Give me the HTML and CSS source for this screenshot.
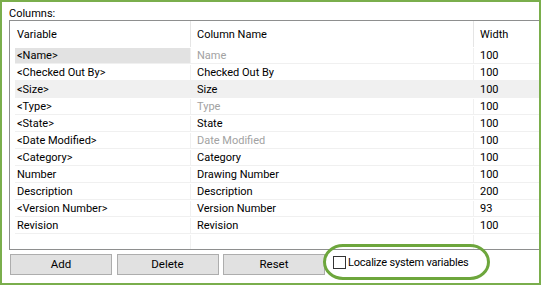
FILE: index.html
```html
<!DOCTYPE html>
<html>
<head>
<meta charset="utf-8">
<link rel="stylesheet" href="styles.css">
</head>
<body>
<div class="frame">
  <div class="label">Columns:</div>
  <div class="table">
    <div class="row head">
      <div class="c1">Variable</div>
      <div class="c2">Column Name</div>
      <div class="c3">Width</div>
    </div>
    <div class="row">
      <div class="c1 sel">&lt;Name&gt;</div>
      <div class="c2 dim">Name</div>
      <div class="c3">100</div>
    </div>
    <div class="row">
      <div class="c1">&lt;Checked Out By&gt;</div>
      <div class="c2">Checked Out By</div>
      <div class="c3">100</div>
    </div>
    <div class="row hover">
      <div class="c1">&lt;Size&gt;</div>
      <div class="c2">Size</div>
      <div class="c3">100</div>
    </div>
    <div class="row">
      <div class="c1">&lt;Type&gt;</div>
      <div class="c2 dim">Type</div>
      <div class="c3">100</div>
    </div>
    <div class="row">
      <div class="c1">&lt;State&gt;</div>
      <div class="c2">State</div>
      <div class="c3">100</div>
    </div>
    <div class="row">
      <div class="c1">&lt;Date Modified&gt;</div>
      <div class="c2 dim">Date Modified</div>
      <div class="c3">100</div>
    </div>
    <div class="row">
      <div class="c1">&lt;Category&gt;</div>
      <div class="c2">Category</div>
      <div class="c3">100</div>
    </div>
    <div class="row">
      <div class="c1">Number</div>
      <div class="c2">Drawing Number</div>
      <div class="c3">100</div>
    </div>
    <div class="row">
      <div class="c1">Description</div>
      <div class="c2">Description</div>
      <div class="c3">200</div>
    </div>
    <div class="row">
      <div class="c1">&lt;Version Number&gt;</div>
      <div class="c2">Version Number</div>
      <div class="c3">93</div>
    </div>
    <div class="row">
      <div class="c1">Revision</div>
      <div class="c2">Revision</div>
      <div class="c3">100</div>
    </div>
    <div class="row empty">
      <div class="c1"></div>
      <div class="c2"></div>
      <div class="c3"></div>
    </div>
  </div>
  <div class="actions">
    <button class="btn">Add</button>
    <button class="btn">Delete</button>
    <button class="btn">Reset</button>
    <label class="check">
      <span class="box"></span>
      <span>Localize system variables</span>
    </label>
  </div>
</div>
</body>
</html>
```

FILE: styles.css
```css
html, body {
  margin: 0;
  padding: 0;
  background: #ffffff;
}

.frame {
  width: 541px;
  height: 285px;
  box-sizing: border-box;
  border: 2px solid #7aae4c;
  overflow: hidden;
  padding: 4px 0 0 7px;
  font-family: "Roboto", "Liberation Sans", sans-serif;
  font-size: 11px;
  color: #000;
  background: #fff;
}

.label {
  height: 14px;
  line-height: 16px;
}

.table {
  width: 545px;
  height: 230px;
  box-sizing: border-box;
  border: 1px solid #8e8f8f;
  padding-left: 5px;
}

.row {
  display: grid;
  grid-template-columns: 175px 283px 1fr;
  height: 17px;
  line-height: 15px;
  padding-top: 1px;
  box-sizing: border-box;
  border-bottom: 1px solid #f0f0f0;
}

.row > div {
  white-space: nowrap;
  overflow: hidden;
}

.row .c1 {
  padding-left: 2px;
}

.row .c2,
.row .c3 {
  border-left: 1px solid #f0f0f0;
  padding-left: 6px;
}

.row.head {
  height: 26px;
  line-height: 27px;
  padding-top: 0;
  border-bottom: none;
}

.row.head .c2,
.row.head .c3 {
  border-left-color: #e5e5e5;
}

.row.empty {
  height: 15px;
  border-bottom: none;
}

.sel {
  background: #e2e2e2;
}

.hover {
  background: #f0f0f0;
}

.dim {
  color: #a2a2a2;
}

.actions {
  display: flex;
  align-items: flex-start;
  gap: 4.5px;
  margin-top: 4px;
  padding-left: 1px;
}

.btn {
  width: 102px;
  height: 21px;
  box-sizing: border-box;
  border: 1px solid #adadad;
  background: #e1e1e1;
  font-family: inherit;
  font-size: 11.5px;
  color: #000;
  padding: 0;
  line-height: 19px;
  flex: none;
}

.check {
  display: flex;
  align-items: center;
  gap: 2px;
  box-sizing: border-box;
  height: 36px;
  margin-top: -10px;
  margin-left: -6.5px;
  padding: 0 18px 0 7px;
  border: 3px solid #6da63c;
  border-radius: 20px / 18px;
  font-size: 11px;
  letter-spacing: -0.2px;
}

.box {
  width: 13px;
  height: 13px;
  box-sizing: border-box;
  border: 1px solid #333;
  background: #fff;
  flex: none;
}
```
